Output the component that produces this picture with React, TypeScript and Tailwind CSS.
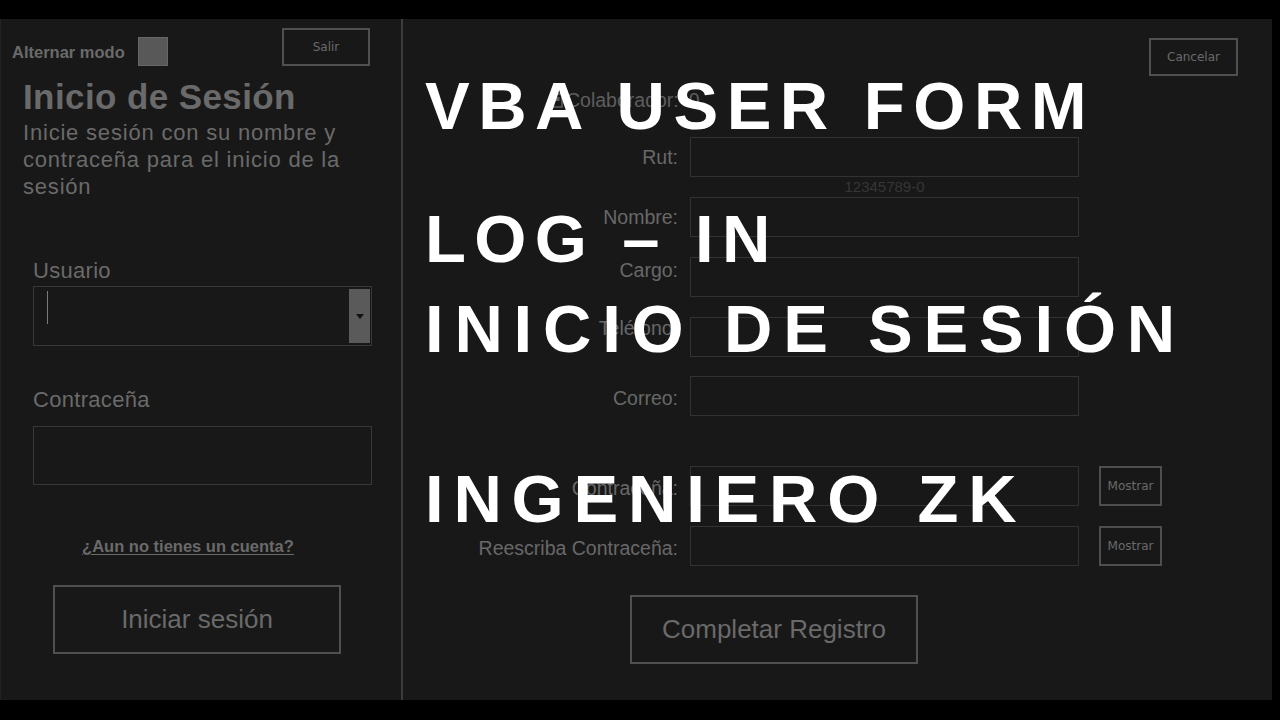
import React from "react";

const ui = { fontFamily: '"Liberation Sans", Arial, sans-serif' };
const small = { fontFamily: '"DejaVu Sans", Verdana, sans-serif' };

function FieldRow({
  label,
  labelPad = "",
  button,
  className = "",
}: {
  label: string;
  labelPad?: string;
  button?: string;
  className?: string;
}) {
  return (
    <div className={`flex items-center h-[40px] ${className}`}>
      <div
        className={`w-[275px] text-right text-[19.5px] leading-[24px] text-[#686868] ${labelPad}`}
        style={ui}
      >
        {label}
      </div>
      <div className="ml-[12px] w-[389px] h-full border border-[#323232] bg-[#181818]" />
      {button && (
        <button
          className="ml-[20px] w-[63px] h-full border-2 border-[#4e4e4e] text-[12px] text-[#6a6a6a]"
          style={small}
        >
          {button}
        </button>
      )}
    </div>
  );
}

function LoginPanel() {
  return (
    <div className="w-[401px] h-full bg-[#181818] flex flex-col border-l border-[#222]" style={ui}>
      {/* header: theme toggle + exit */}
      <div className="flex items-start mt-[9px] h-[38px]">
        <div className="flex items-center mt-[9px] ml-[11px]">
          <span className="text-[16.5px] font-bold text-[#6a6a6a] leading-[20px]">Alternar modo</span>
          <span className="ml-[13px] w-[30px] h-[29px] bg-[#585858] border border-[#666]" />
        </div>
        <button
          className="ml-auto mr-[31px] w-[88px] h-[38px] border-2 border-[#505050] text-[12px] text-[#6a6a6a] pb-[1px]"
          style={small}
        >
          Salir
        </button>
      </div>

      <div className="pl-[22px] mt-[12px] text-[35px] leading-[38px] font-bold text-[#6a6a6a] tracking-[0.4px]">
        Inicio de Sesión
      </div>
      <div className="pl-[22px] pr-[40px] mt-[3px] text-[22px] leading-[27px] text-[#6a6a6a] tracking-[0.8px]">
        Inicie sesión con su nombre y contraceña para el inicio de la sesión
      </div>

      <div className="pl-[32px] mt-[58px] text-[22px] leading-[26px] text-[#6a6a6a] tracking-[0.3px]">Usuario</div>
      <div className="ml-[32px] mt-[2px] w-[339px] h-[60px] border border-[#383838] flex">
        <div className="flex-1 relative">
          <span className="absolute left-[13px] top-[4px] w-[1px] h-[33px] bg-[#7a7a7a]" />
        </div>
        <div className="w-[22px] h-full py-[2px] pr-[1px]">
          <div className="w-full h-full bg-[#5a5a5a] flex items-center justify-center">
            <svg width="8" height="5" viewBox="0 0 8 5">
              <path d="M0 0h8L4 5z" fill="#111" />
            </svg>
          </div>
        </div>
      </div>

      <div className="pl-[32px] mt-[41px] text-[22px] leading-[26px] text-[#6a6a6a] tracking-[0.3px]">Contraceña</div>
      <div className="ml-[32px] mt-[13px] w-[339px] h-[59px] border border-[#383838]" />

      <div className="mt-[51px] text-center pr-[26px] text-[16.5px] leading-[20px] font-bold text-[#6a6a6a] underline underline-offset-[2px]">
        ¿Aun no tienes un cuenta?
      </div>

      <button className="ml-[52px] mt-[29px] w-[288px] h-[69px] border-2 border-[#505050] text-[26px] text-[#6a6a6a]">
        Iniciar sesión
      </button>
    </div>
  );
}

function RegisterPanel() {
  return (
    <div className="flex-1 h-full bg-[#181818] flex flex-col" style={ui}>
      <div className="flex justify-end pr-[34px] pt-[19px]">
        <button
          className="w-[89px] h-[38px] border-2 border-[#505050] text-[12px] text-[#6a6a6a]"
          style={small}
        >
          Cancelar
        </button>
      </div>

      <div className="mt-[12px] h-[24px] flex items-center pl-[148px] text-[19.5px] leading-[24px] text-[#5e5e5e]">
        <svg width="12" height="15" viewBox="0 0 12 15" className="mr-[3px]">
          <rect x="1" y="1" width="10" height="13" fill="none" stroke="#5e5e5e" strokeWidth="1.5" />
          <rect x="3.5" y="4" width="5" height="4" fill="#5e5e5e" />
        </svg>
        <span>Colaborador:</span>
        <span className="ml-[10px]">0</span>
      </div>

      <FieldRow label="Rut:" className="mt-[25px]" />
      <div className="h-[20px] flex">
        <div className="ml-[287px] w-[389px] text-center text-[15px] leading-[20px] text-[#363636]">
          12345789-0
        </div>
      </div>
      <FieldRow label="Nombre:" />
      <FieldRow label="Cargo:" labelPad="pb-[14px]" className="mt-[20px]" />
      <FieldRow label="Teléfono:" labelPad="pb-[18px]" className="mt-[20px]" />
      <FieldRow label="Correo:" labelPad="pt-[4px]" className="mt-[19px]" />
      <FieldRow label="Contraceña:" labelPad="pt-[4px]" button="Mostrar" className="mt-[50px]" />
      <FieldRow label="Reescriba Contraceña:" labelPad="pt-[4px]" button="Mostrar" className="mt-[20px]" />

      <button className="ml-[227px] mt-[29px] w-[288px] h-[69px] border-2 border-[#505050] text-[26px] text-[#6a6a6a]">
        Completar Registro
      </button>
    </div>
  );
}

export default function App() {
  return (
    <div className="relative w-[1280px] h-[720px] bg-black overflow-hidden">
      <div className="absolute inset-x-0 top-[19px] h-[681px] flex">
        <LoginPanel />
        <div className="w-[2px] h-full bg-[#3c3c3c]" />
        <RegisterPanel />
        <div className="w-[8px] h-full bg-black" />
      </div>

      {/* title card laid over the forms */}
      <div
        className="absolute left-[425px] top-0 pointer-events-none text-white font-bold text-[67px] leading-[67px]"
        style={ui}
      >
        <div className="mt-[72px] tracking-[8.5px]">VBA USER FORM</div>
        <div className="mt-[66px] tracking-[8.4px]">LOG – IN</div>
        <div className="mt-[23px] tracking-[10.8px]">INICIO DE SESIÓN</div>
        <div className="mt-[103px] tracking-[9.8px]">INGENIERO ZK</div>
      </div>
    </div>
  );
}
